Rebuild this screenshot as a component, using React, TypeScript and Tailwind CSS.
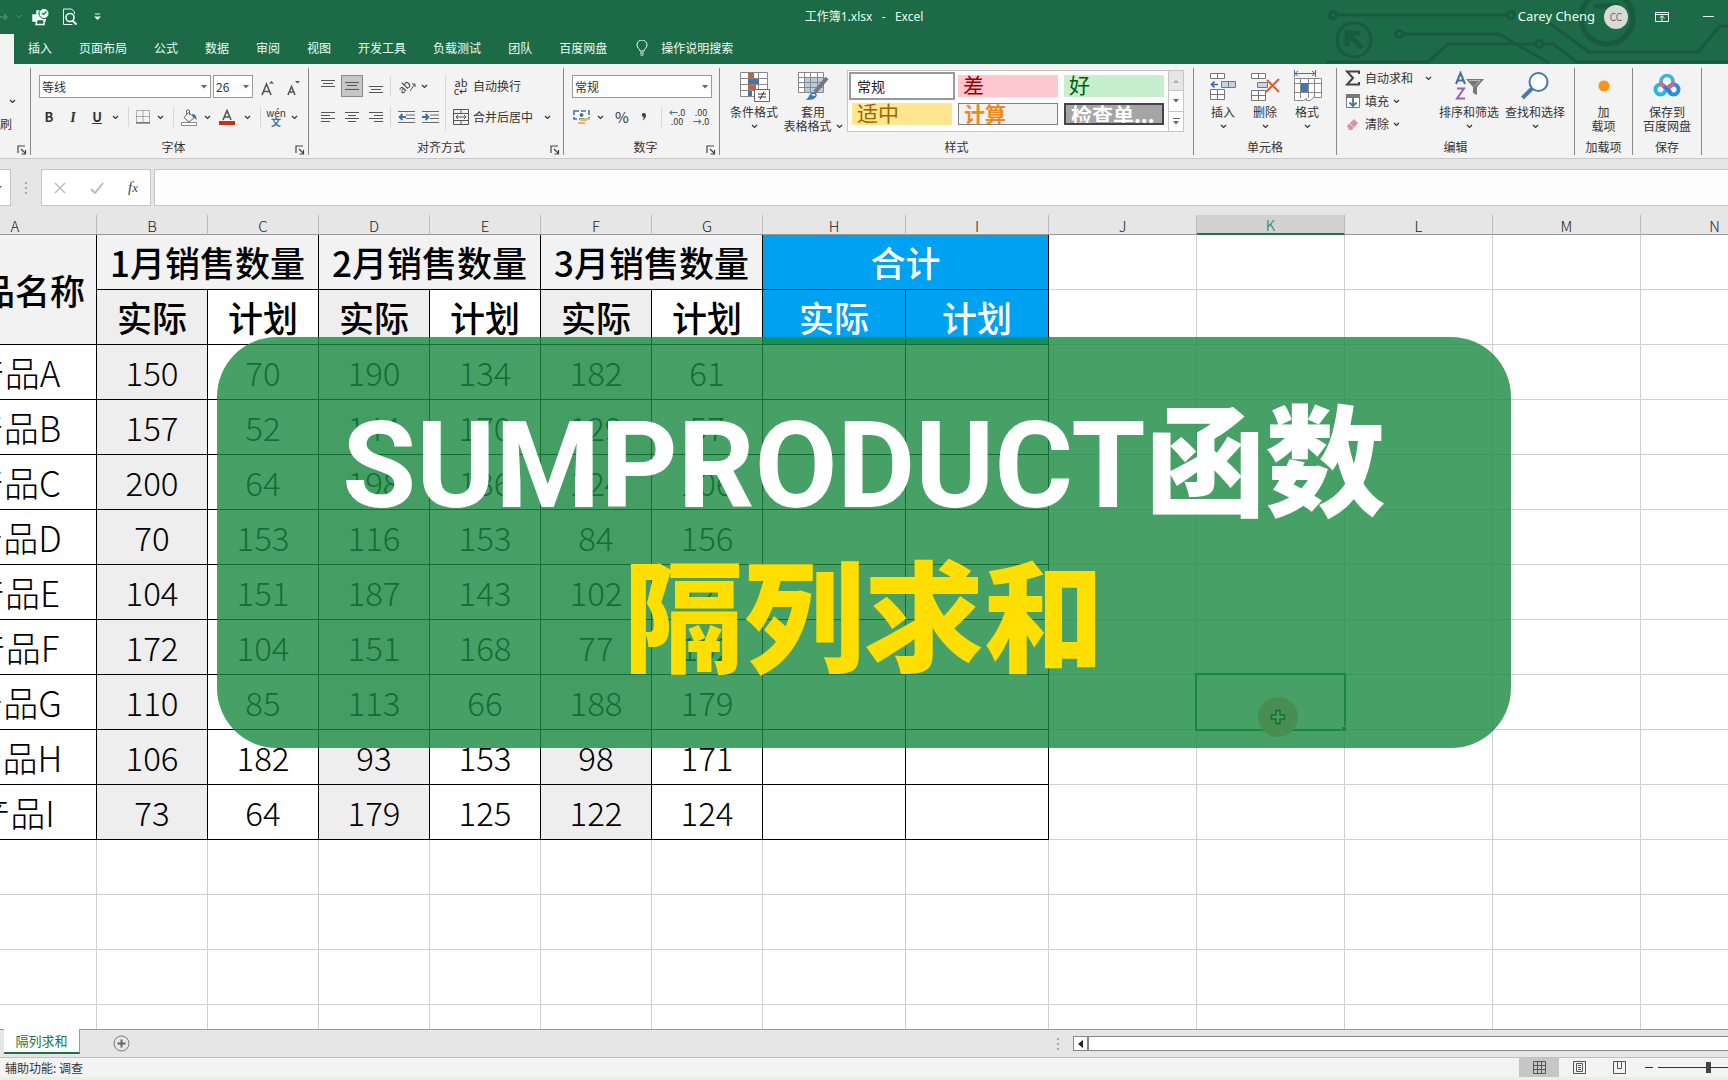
import React from "react";
import clsx from "clsx";

interface IconProps {
    w: number;
    h: number;
    children: React.ReactNode;
}

const Svg: React.FC<IconProps> = ({ w, h, children }) => (
    <svg width={w} height={h} viewBox={`0 0 ${w} ${h}`} fill="none" className="shrink-0" aria-hidden="true">{children}</svg>
);

const Chevron = () => (
    <Svg w={7} h={5}><path d="M1 1l2.5 2.5L6 1" stroke="#333" strokeWidth="1.2" /></Svg>
);

const Caret: React.FC<{ className?: string }> = ({ className }) => (
    <svg width="6" height="4" viewBox="0 0 6 4" className={className} aria-hidden="true"><path d="M0 0h6L3 3.5z" fill="#666" /></svg>
);

const Launcher = () => (
    <button aria-label="更多设置" className="absolute bottom-0 right-[3px]">
        <Svg w={10} h={10}><path d="M1 8V1h7M4 4l4.500 4.500M8.500 5v4h-4" stroke="#444" strokeWidth="1.200" /></Svg>
    </button>
);

interface ToolProps {
    label: string;
    className?: string;
    children?: React.ReactNode;
}

const Tool: React.FC<ToolProps> = ({ label, className, children }) => (
    <button aria-label={label} className={clsx("flex h-[22px] shrink-0 items-center justify-center", className)}>{children}</button>
);

const More = () => <Tool label="更多" className="w-4"><Chevron /></Tool>;
const Divider = () => <span className="mx-[5px] h-5 w-px shrink-0 bg-[#d5d5d5]" />;

interface GroupProps {
    title: string;
    className: string;
    launcher?: boolean;
    children: React.ReactNode;
}

const Group: React.FC<GroupProps> = ({ title, className, launcher, children }) => (
    <section aria-label={title} className={clsx("relative flex h-[87px] shrink-0 flex-col border-r border-[#888]", className)}>
        <div className="flex-1">{children}</div>
        <p className="h-4 text-center text-xs">{title}</p>
        {launcher ? <Launcher /> : null}
    </section>
);

interface ComboProps {
    label: string;
    value: string;
    className: string;
}

const Combo: React.FC<ComboProps> = ({ label, value, className }) => (
    <div className={clsx("relative shrink-0", className)}>
        <select aria-label={label} className="block h-[23px] w-full appearance-none border border-[#999] bg-white pl-[2px] text-xs text-[#333]">
            <option>{value}</option>
        </select>
        <Caret className="pointer-events-none absolute right-1 top-[10px]" />
    </div>
);

interface BigButtonProps {
    lines: string[];
    icon: React.ReactNode;
    className: string;
    chevron?: boolean;
}

const BigButton: React.FC<BigButtonProps> = ({ lines, icon, className, chevron }) => (
    <button className={clsx("flex shrink-0 flex-col items-center text-xs leading-[14px]", className)}>
        <span className="flex h-9 items-center">{icon}</span>
        <span className="mt-px whitespace-nowrap">{lines[0]}</span>
        <span className="flex h-[14px] items-center gap-1 whitespace-nowrap">
            {lines[1]}
            {chevron ? <Chevron /> : null}
        </span>
    </button>
);

/* horizontal strokes: [x, y, width] */
const Lines: React.FC<{ rows: number[][] }> = ({ rows }) => (
    <Svg w={14} h={18}>
        {rows.map(([x, y, w]) => <path key={y} d={`M${x} ${y}.5h${w}`} stroke="#555" />)}
    </Svg>
);

const IndentIcon: React.FC<{ out?: boolean }> = ({ out }) => (
    <Svg w={17} h={14}>
        <path d="M0 1.500h17M8 5h9M8 8.500h9M0 12.500h17" stroke="#666" />
        <path d={out ? "M8 7H2M4.500 4L1.500 7l3 3" : "M0 7h6M3.500 4l3 3-3 3"} stroke="#41719c" strokeWidth="1.800" />
    </Svg>
);

const FillIcon = () => (
    <Svg w={17} h={17}>
        <path d="M7.500 3.500l6 5-5.500 4.500-5-4.500zM5.500 5.500V2c0-1.500 3-1.500 3 0v4" stroke="#666" />
        <path d="M11 5c3 0 5 2 4.500 6.500-1-2-2-3-3.500-3z" fill="#41719c" />
        <path d="M.5 13.500h15v3H.5z" fill="#fff" stroke="#888" />
    </Svg>
);

const MoneyIcon = () => (
    <Svg w={18} h={17}>
        <path d="M1 2h15v8H1z" fill="#fff" stroke="#41719c" strokeWidth="1.600" strokeDasharray="5 2" />
        <circle cx="8.500" cy="6" r="2" fill="#41719c" />
        <path d="M7 10h7v2H7zM5 13h7v2H5zM11 9h6v2h-6z" fill="#e8b668" />
    </Svg>
);

const CondIcon = () => (
    <Svg w={31} h={31}>
        <path d="M1.500 1.500h27v24h-27zM1.500 7.500h27M1.500 13.500h27M1.500 19.500h27M9.500 1v24M19.500 1v24" fill="#fff" stroke="#888" />
        <path d="M9 2h6v5H9zM9 14h8v5H9z" fill="#c8613f" />
        <path d="M9 8h11v5H9zM9 20h4v5H9z" fill="#4774a8" />
        <path d="M15.500 18.500h15v12h-15z" fill="#fff" stroke="#666" />
        <path d="M19 23h8M19 26h8M25 20.500l-4 8" stroke="#333" />
    </Svg>
);

const TableIcon = () => (
    <Svg w={32} h={30}>
        <path d="M1.500 1.500h25v20h-25z" fill="#fff" />
        <path d="M8 7h18v14H8z" fill="#b9cbe3" />
        <path d="M1.500 1.500h25v20h-25zM1.500 6.500h25M1.500 11.500h25M1.500 16.500h25M7.500 1v20M13.500 1v20M20.500 1v20" stroke="#888" />
        <path d="M30 7L18 21" stroke="#777" strokeWidth="4" />
        <path d="M8 29c4-1 4-7 8-8 4 0 5 4 2 6-2 2-6 2-10 2z" fill="#3d7ab5" />
        <path d="M14 24c2-2 5-1 4 1z" fill="#fff" />
    </Svg>
);

const InsertIcon = () => (
    <Svg w={28} h={30}>
        <path d="M1.500 2.500h14v5h-14zM8.500 2v6M1.500 18.500h14v10h-14zM1.500 23.500h14M8.500 18v11" fill="#fff" stroke="#777" />
        <path d="M12.500 10.500h14v6h-14zM19.500 10v7" fill="#c5d3e6" stroke="#777" />
        <path d="M9 13.500H3M5.500 10.500l-3 3 3 3" stroke="#2f6aab" strokeWidth="1.600" />
    </Svg>
);

const DeleteIcon = () => (
    <Svg w={30} h={30}>
        <path d="M1.500 2.500h14v5h-14zM8.500 2v6M1.500 19.500h14v10h-14zM1.500 24.500h14M8.500 19v11" fill="#fff" stroke="#777" />
        <path d="M7.500 11.500h10v5h-10z" fill="#c5d3e6" stroke="#777" />
        <path d="M17 9l12 12M29 8L16 21" stroke="#d4623a" strokeWidth="2" />
    </Svg>
);

const FormatIcon = () => (
    <Svg w={29} h={32}>
        <path d="M1 3.500h22M1.500 0v7M22.500 0v7M5 1L2 3.500 5 6M19 1l3 2.500L19 6" stroke="#41719c" />
        <path d="M1.500 8.500h27v19h-8l-3 3h-4v-2l-3 2h-9zM1.500 13.500h27M1.500 22.500h27M7.500 8v20M15.500 8v20M21.500 8v20" fill="#fff" stroke="#888" />
        <path d="M8 13h7v9H8z" fill="#4575b4" />
    </Svg>
);

const SortIcon = () => (
    <Svg w={30} h={30}>
        <path d="M2 13L6.500 2 11 13M3.500 9.500h6" stroke="#41719c" strokeWidth="2" />
        <path d="M3 17.500h7L3 27.500h8" stroke="#9a63ad" strokeWidth="2" />
        <path d="M12 8h18l-7 8v8l-4-2v-6z" fill="#777" />
        <path d="M15 9.500h11l-6 6" stroke="#bbb" />
    </Svg>
);

const FindIcon = () => (
    <Svg w={30} h={30}>
        <circle cx="18.500" cy="11" r="9" fill="#fff" stroke="#4678ad" strokeWidth="2" />
        <path d="M12 17.500L2.500 27" stroke="#4678ad" strokeWidth="4" />
    </Svg>
);

const CloudIcon = () => (
    <Svg w={28} h={26}>
        <circle cx="14" cy="8.500" r="6" stroke="#39b4dc" strokeWidth="3.500" />
        <circle cx="7.500" cy="16.500" r="5" stroke="#2fb5e3" strokeWidth="4" />
        <circle cx="20.500" cy="16.500" r="5" stroke="#2a90dd" strokeWidth="4" />
        <path d="M8 8.500a6 6 0 1 0 12 0" stroke="#e95f80" strokeWidth="3.500" />
        <path d="M11 13.500l7 6" stroke="#2d7fd8" strokeWidth="3.500" />
    </Svg>
);

const tabs = ["插入", "页面布局", "公式", "数据", "审阅", "视图", "开发工具", "负载测试", "团队", "百度网盘"];

const Header = () => (
    <header className="relative h-16 shrink-0 overflow-hidden bg-[#1d6a47] text-xs text-[#e9fff3]">
        <svg width="428" height="64" viewBox="0 0 428 64" fill="none" stroke="#195a3d" strokeWidth="3" className="absolute right-0 top-0" aria-hidden="true">
            <circle cx="33" cy="15" r="3.500" />
            <path d="M37 15h170" />
            <circle cx="211" cy="15" r="3.500" />
            <circle cx="54" cy="40" r="17" />
            <path d="M62 48L48 34M47 46V33h13" strokeWidth="5" />
            <circle cx="99" cy="34" r="3.500" />
            <path d="M103 34h96l50 29" />
            <path d="M26 62h102l20-18h87" />
            <circle cx="239" cy="44" r="3.500" />
            <path d="M243 44h10l24 18h151" />
            <path d="M249 23l40 29h109l22-26h8" />
            <circle cx="307" cy="18" r="26" strokeWidth="5" />
            <path d="M294 6h26" strokeWidth="5" />
        </svg>
        <div className="relative flex h-[34px] items-center justify-between">
            <div className="flex flex-1 items-center">
                <button aria-label="重做" className="flex w-[32px] items-center gap-2">
                    <Svg w={8} h={8}><path d="M0 4h7M4 1l3 3-3 3" stroke="#4e8c6e" strokeWidth="1.500" /></Svg>
                    <Svg w={6} h={4}><path d="M0 0l3 3 3-3" stroke="#4e8c6e" /></Svg>
                </button>
                <button aria-label="快速打印">
                    <Svg w={17} h={18}>
                        <path d="M1 7h12v6H1zM5 7V3h4" stroke="#e9fff3" strokeWidth="1.500" fill="#e9fff3" />
                        <path d="M5 11.500h7v5H4z" fill="#1d6a47" stroke="#e9fff3" strokeWidth="1.500" />
                        <circle cx="12" cy="5.500" r="5" fill="#e9fff3" stroke="#1d6a47" />
                        <path d="M10 5l1.500 1.500L14.500 3.500" stroke="#1d6a47" strokeWidth="1.200" />
                    </Svg>
                </button>
                <button aria-label="打印预览" className="ml-3">
                    <Svg w={18} h={18}>
                        <path d="M13.500 6V4l-3-3h-8v15.500h9" stroke="#e9fff3" />
                        <circle cx="9" cy="9.500" r="4" stroke="#e9fff3" strokeWidth="1.600" />
                        <path d="M11.500 12.500l4 4" stroke="#e9fff3" strokeWidth="2" />
                    </Svg>
                </button>
                <button aria-label="自定义快速访问工具栏" className="ml-[15px]">
                    <Svg w={7} h={8}><path d="M1 1h5" stroke="#e9fff3" /><path d="M0 3.500h7L3.500 7z" fill="#e9fff3" /></Svg>
                </button>
            </div>
            <h1 className="whitespace-pre font-['Noto_Sans','Noto_Sans_CJK_SC',sans-serif]">工作簿1.xlsx   -   Excel</h1>
            <div className="flex flex-1 items-center justify-end">
                <span className="font-['Noto_Sans',sans-serif] text-[13px]">Carey Cheng</span>
                <span className="ml-[9px] flex size-6 items-center justify-center rounded-full bg-[#d9d9d9] text-[10px] text-[#666]">CC</span>
                <button aria-label="功能区显示选项" className="ml-[27px]">
                    <Svg w={14} h={12}><path d="M.5 1.500h13v9H.5zM.5 3.500h13M7 10V5M4.500 7L7 4.800 9.500 7" stroke="#e9fff3" /></Svg>
                </button>
                <button aria-label="最小化" className="ml-[34px] mr-[14px]">
                    <Svg w={11} h={2}><path d="M0 .5h11" stroke="#e9fff3" /></Svg>
                </button>
            </div>
        </div>
        <nav className="relative flex h-[30px] items-center">
            <span className="mr-[14px] h-full w-[14px] bg-[#f3f3f3]" />
            <div className="flex items-center gap-[27px] pb-[3px]">
                {tabs.map((t) => <button key={t}>{t}</button>)}
            </div>
            <button className="ml-[29px] flex items-center gap-[13px] pb-[3px]">
                <Svg w={12} h={16}><path d="M4 11c0-2-3-3-3-6a5 5 0 0 1 10 0c0 3-3 4-3 6zM4 13h4M4.500 15h3" stroke="#e9fff3" /></Svg>
                操作说明搜索
            </button>
        </nav>
    </header>
);

const styleCell = "flex h-[22px] w-[100px] overflow-hidden pl-[5px] text-[21px] leading-[18px]";

const Ribbon = () => (
    <div className="flex h-[95px] shrink-0 overflow-hidden border-b border-[#c8c8c8] bg-[#f3f3f3] pt-1 text-[#333]">
        <section className="relative h-[87px] w-[31px] shrink-0 border-r border-[#888] pt-[31px]">
            <span className="flex justify-end pr-[14px]"><Chevron /></span>
            <p className="mt-3 text-xs">刷</p>
            <Launcher />
        </section>

        <Group title="字体" launcher className="w-[278px] pl-2 pt-[7px]">
            <div className="flex items-center gap-[2px]">
                <Combo label="字体" value="等线" className="w-[172px]" />
                <Combo label="字号" value="26" className="w-10" />
                <Tool label="增大字号" className="w-[26px] items-end">
                    <Svg w={14} h={18}><path d="M1 15L5.500 4 10 15M2.500 11.500h6" stroke="#555" strokeWidth="1.600" /><path d="M8 3.500L10.500 1 13 3.500z" fill="#555" /></Svg>
                </Tool>
                <Tool label="减小字号" className="w-[22px] items-end">
                    <Svg w={14} h={18}><path d="M1 15L4.500 6.500 8 15M2.500 12h4" stroke="#555" strokeWidth="1.600" /><path d="M8 1L10.500 3.500 13 1z" fill="#555" /></Svg>
                </Tool>
            </div>
            <div className="mt-2 flex items-center">
                <Tool label="加粗" className="w-5 text-[13px] font-bold">B</Tool>
                <Tool label="倾斜" className="w-7 font-serif text-[14px] font-bold italic">I</Tool>
                <Tool label="下划线" className="w-5 text-[13px] font-bold underline">U</Tool>
                <More />
                <Divider />
                <Tool label="边框" className="w-[18px]">
                    <Svg w={14} h={14}><path d="M.5.5h13v12H.5zM7 .5v12M.5 6.500h13" stroke="#666" strokeDasharray="1 1" /><path d="M0 13h14" stroke="#444" /></Svg>
                </Tool>
                <More />
                <Divider />
                <Tool label="填充颜色" className="w-5"><FillIcon /></Tool>
                <More />
                <Tool label="字体颜色" className="w-6">
                    <Svg w={16} h={17}><path d="M4 11L8 1.500 12 11M5.500 8h5" stroke="#555" strokeWidth="1.600" /><path d="M0 12h16v4H0z" fill="#c8301e" /></Svg>
                </Tool>
                <More />
                <Divider />
                <Tool label="拼音指南" className="w-5 flex-col text-[10px] leading-[9px]">
                    <span>wén</span>
                    <span className="font-bold text-[#41719c]">文</span>
                </Tool>
                <More />
            </div>
        </Group>

        <Group title="对齐方式" launcher className="w-[255px] pl-[10px] pt-[7px]">
            <div className="flex">
                <div className="flex flex-col gap-[9px]">
                    <div className="flex items-center">
                        <Tool label="顶端对齐" className="w-[18px]"><Lines rows={[[0, 3, 14], [2, 6, 10], [0, 9, 14]]} /></Tool>
                        <Tool label="垂直居中" className="mx-1 w-[22px] border border-[#888] bg-[#c6c6c6]"><Lines rows={[[0, 5, 14], [2, 8, 10], [0, 12, 14]]} /></Tool>
                        <Tool label="底端对齐" className="w-[18px]"><Lines rows={[[0, 9, 14], [2, 12, 10], [0, 15, 14]]} /></Tool>
                        <Divider />
                        <Tool label="方向" className="w-5">
                            <span className="-rotate-45 text-[11px] leading-3">ab</span>
                            <Svg w={6} h={14}><path d="M0 12l5-7M2 5h3v3" stroke="#555" /></Svg>
                        </Tool>
                        <More />
                    </div>
                    <div className="flex items-center">
                        <Tool label="左对齐" className="w-[18px]"><Lines rows={[[0, 4, 14], [0, 7, 9], [0, 10, 14], [0, 13, 9]]} /></Tool>
                        <Tool label="居中" className="mx-1 w-[22px]"><Lines rows={[[0, 4, 14], [3, 7, 8], [0, 10, 14], [3, 13, 8]]} /></Tool>
                        <Tool label="右对齐" className="w-[18px]"><Lines rows={[[0, 4, 14], [5, 7, 9], [0, 10, 14], [5, 13, 9]]} /></Tool>
                        <Divider />
                        <Tool label="减少缩进量" className="w-5"><IndentIcon out /></Tool>
                        <Tool label="增加缩进量" className="ml-1 w-5"><IndentIcon /></Tool>
                    </div>
                </div>
                <span className="ml-[5px] mr-[7px] h-14 w-px bg-[#d5d5d5]" />
                <div className="flex flex-col gap-[9px]">
                    <button className="flex h-[22px] items-center gap-1 text-xs">
                        <span className="w-4 text-center text-[11px] leading-[8px]">ab c↵</span>
                        自动换行
                    </button>
                    <div className="flex items-center">
                        <button className="flex h-[22px] items-center gap-1 text-xs">
                            <Svg w={16} h={16}><path d="M.5.5h15v15H.5zM.5 4.500h15M.5 11.500h15M8 0v4M8 12v4M3 8h10M5 6L3 8l2 2M11 6l2 2-2 2" stroke="#555" /></Svg>
                            合并后居中
                        </button>
                        <span className="ml-[6px]"><More /></span>
                    </div>
                </div>
            </div>
        </Group>

        <Group title="数字" launcher className="w-[156px] pl-2 pt-[7px]">
            <Combo label="数字格式" value="常规" className="w-[140px]" />
            <div className="mt-2 flex items-center">
                <Tool label="会计数字格式" className="w-5"><MoneyIcon /></Tool>
                <More />
                <Tool label="百分比样式" className="ml-1 w-5 text-[15px]">%</Tool>
                <Tool label="千位分隔样式" className="w-6"><Svg w={6} h={10}><path d="M3 1a2 2 0 0 1 2 2c0 3-1.500 4.500-4 5.500 1.500-1.500 2-2.500 1.500-3.500A2 2 0 0 1 3 1z" fill="#444" /></Svg></Tool>
                <Divider />
                <Tool label="增加小数位数" className="w-5 flex-col text-[9px] leading-[9px]"><span><b className="text-[#41719c]">←</b>.0</span><span>.00</span></Tool>
                <Tool label="减少小数位数" className="ml-1 w-5 flex-col text-[9px] leading-[9px]"><span>.00</span><span><b className="text-[#41719c]">→</b>.0</span></Tool>
            </div>
        </Group>

        <Group title="样式" className="w-[474px]">
            <div className="flex pl-[5px]">
                <BigButton lines={["条件格式", ""]} icon={<CondIcon />} className="w-[58px]" chevron />
                <BigButton lines={["套用", "表格格式"]} icon={<TableIcon />} className="w-[60px]" chevron />
                <div className="ml-1 mt-[2px] flex h-[62px] border border-[#c6c6c6] bg-white">
                    <div className="grid grid-cols-[103px_100px_100px] grid-rows-[28px_28px] content-start items-center gap-x-[6px] pl-px pr-1 pt-px">
                        <button className="flex h-7 w-[106px] items-center border-2 border-[#999] pl-[6px] text-[14px] text-[#222]">常规</button>
                        <button className={clsx(styleCell, "bg-[#ffc7ce] text-[#9c0006]")}>差</button>
                        <button className={clsx(styleCell, "bg-[#c6efce] text-[#006100]")}>好</button>
                        <button className={clsx(styleCell, "ml-[3px] bg-[#ffe68f] text-[#9c6500]")}>适中</button>
                        <button className={clsx(styleCell, "border border-[#7f7f7f] bg-[#f2f2f2] font-bold text-[#ed8a1c]")}>计算</button>
                        <button className={clsx(styleCell, "border-2 border-[#444] bg-[#a5a5a5] pl-[2px] font-bold text-white")}>检查单...</button>
                    </div>
                    <div className="flex w-[15px] flex-col divide-y divide-[#c6c6c6] border-l border-[#c6c6c6]">
                        <button aria-label="上一行" className="flex flex-1 items-center justify-center bg-[#e6e6e6]"><Caret className="rotate-180 opacity-40" /></button>
                        <button aria-label="下一行" className="flex flex-1 items-center justify-center"><Caret /></button>
                        <button aria-label="其他样式" className="flex flex-1 flex-col items-center justify-center gap-[2px]"><span className="h-px w-[7px] bg-[#666]" /><Caret /></button>
                    </div>
                </div>
            </div>
        </Group>

        <Group title="单元格" className="w-[143px]">
            <div className="flex pl-2">
                <BigButton lines={["插入", ""]} icon={<InsertIcon />} className="w-[42px]" chevron />
                <BigButton lines={["删除", ""]} icon={<DeleteIcon />} className="w-[42px]" chevron />
                <BigButton lines={["格式", ""]} icon={<FormatIcon />} className="w-[42px]" chevron />
            </div>
        </Group>

        <Group title="编辑" className="w-[238px]">
            <div className="flex pl-2">
                <div className="flex w-[91px] flex-col text-xs">
                    <button className="flex h-5 items-center gap-1">
                        <Svg w={16} h={16}><path d="M14 4V1.500H2l6 6.500-6 6.500h12V12" stroke="#444" strokeWidth="2" /></Svg>
                        自动求和
                        <span className="ml-2"><Chevron /></span>
                    </button>
                    <button className="mt-[3px] flex h-5 items-center gap-1">
                        <Svg w={16} h={16}><path d="M1.500 1.500h13v13h-13z" fill="#fff" stroke="#777" /><path d="M1 1h14v4H1z" fill="#777" /><path d="M8 5v8M4.500 9.500L8 13l3.500-3.500" stroke="#41719c" strokeWidth="1.800" /></Svg>
                        填充
                        <Chevron />
                    </button>
                    <button className="mt-[3px] flex h-5 items-center gap-1">
                        <Svg w={16} h={16}><path d="M2 10l7-7 4 4-6 7H4z" fill="#e48ea3" /><path d="M4.500 7.500l4 4" stroke="#f9dfe5" /></Svg>
                        清除
                        <Chevron />
                    </button>
                </div>
                <BigButton lines={["排序和筛选", ""]} icon={<SortIcon />} className="w-[66px]" chevron />
                <BigButton lines={["查找和选择", ""]} icon={<FindIcon />} className="w-[66px]" chevron />
            </div>
        </Group>

        <Group title="加载项" className="w-[58px]">
            <BigButton
                lines={["加", "载项"]}
                icon={<Svg w={16} h={16}><circle cx="8" cy="8" r="5.500" fill="#f7941d" /><circle cx="8" cy="8" r="6" stroke="#fbd9ae" /></Svg>}
                className="w-full"
            />
        </Group>

        <Group title="保存" className="w-[69px]">
            <BigButton lines={["保存到", "百度网盘"]} icon={<CloudIcon />} className="w-full" />
        </Group>
    </div>
);

const FormulaBar = () => (
    <div className="flex h-[56px] shrink-0 bg-[#e6e6e6] pb-[9px] pt-[10px]">
        <div className="flex w-[11px] items-center border-y border-r border-[#c6c6c6] bg-white"><Caret className="-ml-1" /></div>
        <div className="flex w-[30px] flex-col items-center justify-center gap-[3px]">
            <i className="size-[2px] bg-[#aaa]" /><i className="size-[2px] bg-[#aaa]" /><i className="size-[2px] bg-[#aaa]" />
        </div>
        <div className="flex w-[110px] items-center justify-between border border-[#c6c6c6] bg-white px-3">
            <button aria-label="取消"><Svg w={12} h={12}><path d="M1 1l10 10M11 1L1 11" stroke="#bbb" strokeWidth="1.500" /></Svg></button>
            <button aria-label="输入"><Svg w={14} h={12}><path d="M1 7l4 4 8-10" stroke="#bbb" strokeWidth="2" /></Svg></button>
            <button aria-label="插入函数" className="font-['Liberation_Serif',serif] text-[15px] italic text-[#444]">f<span className="text-[13px]">x</span></button>
        </div>
        <input aria-label="编辑栏" className="ml-[3px] flex-1 border-y border-l border-[#c6c6c6] bg-[#fdfdfd] px-2 outline-none" />
    </div>
);

const letters = "ABCDEFGHIJKLMNOP".split("");
const rows: [string, number[]][] = [
    ["A", [150, 70, 190, 134, 182, 61]],
    ["B", [157, 52, 144, 170, 129, 57]],
    ["C", [200, 64, 198, 136, 124, 106]],
    ["D", [70, 153, 116, 153, 84, 156]],
    ["E", [104, 151, 187, 143, 102, 121]],
    ["F", [172, 104, 151, 168, 77, 102]],
    ["G", [110, 85, 113, 66, 188, 179]],
    ["H", [106, 182, 93, 153, 98, 171]],
    ["I", [73, 64, 179, 125, 122, 124]],
];

const Empty: React.FC<{ n: number }> = ({ n }) => (
    <>{Array.from({ length: n }, (_, i) => <td key={i} className="border-b border-r border-[#cfcfcf]" />)}</>
);

const ActiveCell = () => (
    <td className="relative border-b border-r border-[#cfcfcf]">
        <div className="absolute -inset-x-[2px] -inset-y-[2px] border-2 border-[#1a7340]" />
        <div className="absolute -bottom-[3px] -right-[3px] size-[6px] border border-white bg-[#1a7340]" />
        <div className="absolute left-[61px] top-[22px] flex size-10 items-center justify-center rounded-full bg-[#ffa08c]">
            <Svg w={16} h={16}><path d="M6 1.500h4V6h4.500v4H10v4.500H6V10H1.500V6H6z" fill="#fff" stroke="#000" strokeWidth="1.500" /></Svg>
        </div>
    </td>
);

const Sheet = () => (
    <div className="relative min-h-0 flex-1 overflow-hidden bg-white">
        <table className="-ml-[66px] w-[2083px] table-fixed border-separate border-spacing-0 text-center text-[35px] leading-[54px] text-black">
            <colgroup>
                {letters.map((l, i) => <col key={l} className={i === 0 ? "w-[163px]" : i < 7 ? "w-[111px]" : i < 9 ? "w-[143px]" : "w-[148px]"} />)}
            </colgroup>
            <thead>
                <tr className="text-[15px] leading-[17px] text-[#222]">
                    {letters.map((l) => (
                        <th key={l} scope="col" className={clsx("border-r border-[#bbb] p-0 pt-px font-light", l === "K" ? "border-b-2 border-b-[#217346] bg-[#d2d2d2] text-[#217346]" : "border-b border-b-[#999] bg-[#e6e6e6]")}>{l}</th>
                    ))}
                </tr>
            </thead>
            <tbody>
                <tr className="h-[55px]">
                    <th rowSpan={2} className="whitespace-nowrap border-b border-r border-black bg-[#f2f2f2] p-0 font-medium">产品名称</th>
                    {[1, 2, 3].map((m) => (
                        <th key={m} colSpan={2} className="whitespace-nowrap border-b border-r border-black bg-[#f2f2f2] p-0 font-medium">{m}月销售数量</th>
                    ))}
                    <th colSpan={2} className="border-b border-r border-black bg-[#00a1f1] p-0 font-medium text-white">合计</th>
                    <Empty n={7} />
                </tr>
                <tr className="h-[55px]">
                    {[0, 1, 2, 3, 4, 5].map((i) => (
                        <th key={i} className={clsx("border-b border-r border-black p-0 font-medium", i % 2 === 0 && "bg-[#eee]")}>{i % 2 === 0 ? "实际" : "计划"}</th>
                    ))}
                    <th className="border-b border-r border-black bg-[#00a1f1] p-0 font-medium text-white">实际</th>
                    <th className="border-b border-r border-black bg-[#00a1f1] p-0 font-medium text-white">计划</th>
                    <Empty n={7} />
                </tr>
                {rows.map(([name, values]) => (
                    <tr key={name} className="h-[55px]">
                        <td className="border-b border-r border-black p-0 font-light">产品{name}</td>
                        {values.map((v, i) => (
                            <td key={i} className={clsx("border-b border-r border-black p-0 text-[33px] font-light", i % 2 === 0 && "bg-[#eee]")}>{v}</td>
                        ))}
                        <td className="border-b border-r border-black" />
                        <td className="border-b border-r border-black" />
                        {name === "G" ? <><Empty n={1} /><ActiveCell /><Empty n={5} /></> : <Empty n={7} />}
                    </tr>
                ))}
                {[12, 13, 14, 15, 16].map((n) => <tr key={n} className="h-[55px]"><Empty n={16} /></tr>)}
            </tbody>
        </table>

        <div className="absolute inset-x-[217px] top-[122px] h-[411px] rounded-[60px] bg-[#198a41]/80 pt-10 text-center text-[120px] font-black leading-[156px]">
            <p className="whitespace-nowrap text-white">
                <span className="font-['Roboto',sans-serif] font-bold leading-none">SUMPRODUCT</span>函数
            </p>
            <p className="text-[#ffde00]">隔列求和</p>
        </div>
    </div>
);

const Footer = () => (
    <footer className="shrink-0 text-xs text-[#333]">
        <div className="flex h-7 border-t border-[#999] bg-[#e6e6e6]">
            <button className="-mt-px ml-1 h-[25px] w-[76px] border-b-2 border-r border-b-[#217346] border-r-[#999] bg-white text-[13px] text-[#217346]">隔列求和</button>
            <button aria-label="新工作表" className="ml-[33px]">
                <Svg w={17} h={17}><circle cx="8.500" cy="8.500" r="7.500" stroke="#777" /><path d="M8.500 4.500v8M4.500 8.500h8" stroke="#666" strokeWidth="2" /></Svg>
            </button>
            <div className="ml-auto flex w-[671px] items-center">
                <div className="flex flex-col gap-[3px]">
                    <i className="size-[2px] bg-[#aaa]" /><i className="size-[2px] bg-[#aaa]" /><i className="size-[2px] bg-[#aaa]" />
                </div>
                <div className="ml-[14px] flex h-[15px] flex-1 border-y border-l border-[#888] bg-white">
                    <button aria-label="向左滚动" className="flex w-[15px] items-center justify-center border-r-2 border-[#888]"><Svg w={5} h={8}><path d="M5 0v8L0 4z" fill="#222" /></Svg></button>
                </div>
            </div>
        </div>
        <div className="flex h-[23px] items-center border-b-[3px] border-t border-b-[#e4f3e0] border-t-[#c0c0c0] bg-[#f3f3f3] pl-[5px]">
            <p>辅助功能: 调查</p>
            <div className="ml-auto flex h-full w-[209px] items-center">
                <button aria-label="普通" className="flex h-full w-10 items-center justify-center bg-[#c6c6c6]">
                    <Svg w={13} h={13}><path d="M.5.5h12v12H.5zM.5 4.500h12M.5 8.500h12M4.500 0v13M8.500 0v13" stroke="#555" /></Svg>
                </button>
                <button aria-label="页面布局" className="flex w-10 justify-center">
                    <Svg w={13} h={13}><path d="M.5.5h12v12H.5zM3.500 2.500h6v8h-6zM5 4.500h3M5 6.500h3M5 8.500h3" stroke="#555" /></Svg>
                </button>
                <button aria-label="分页预览" className="flex w-10 justify-center">
                    <Svg w={13} h={13}><path d="M.5.5h12v12H.5zM4.500 0v7.500h4V0" stroke="#555" /></Svg>
                </button>
                <button aria-label="缩小" className="ml-[6px] h-px w-2 bg-[#333]" />
                <div className="relative ml-[5px] flex h-full flex-1 items-center">
                    <span className="h-px w-full bg-[#333]" />
                    <span className="absolute left-[48px] h-[11px] w-[5px] bg-[#444]" />
                </div>
            </div>
        </div>
    </footer>
);

const App: React.FC = () => (
    <div className="flex h-screen flex-col overflow-hidden font-['Noto_Sans_CJK_SC',sans-serif]">
        <Header />
        <Ribbon />
        <FormulaBar />
        <Sheet />
        <Footer />
    </div>
);

export default App;
